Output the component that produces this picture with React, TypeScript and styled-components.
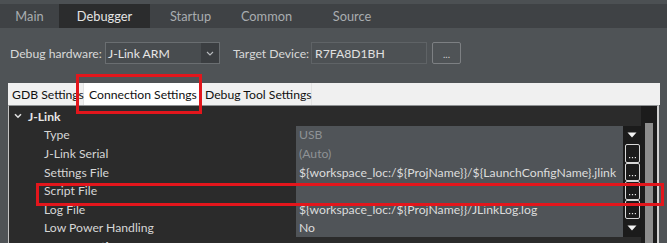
import React from 'react';
import styled, { createGlobalStyle } from 'styled-components';

const Global = createGlobalStyle`
  html, body { margin: 0; padding: 0; background: #4f5356; }
  #root { width: 667px; height: 243px; }
`;

const FONT = `Lato, "Noto Sans", sans-serif`;

const Root = styled.div`
  position: relative;
  width: 667px;
  height: 243px;
  overflow: hidden;
  background: #4f5356;
  font-family: ${FONT};
  font-size: 12px;
  border-top: 4px solid #4c5053;
  box-sizing: border-box;
`;

const TabBar = styled.div`
  display: flex;
  height: 24px;
  background: #3f4245;
`;

const Tab = styled.div<{ $w: number; $active?: boolean }>`
  width: ${p => p.$w}px;
  display: flex;
  align-items: center;
  justify-content: center;
  color: ${p => (p.$active ? '#e4e4e4' : '#a9adb0')};
  background: ${p => (p.$active ? '#2b2c2d' : 'transparent')};
  font-size: 12.8px;
  padding-bottom: 1px;
  box-sizing: border-box;
`;

const FormRow = styled.div`
  display: flex;
  align-items: center;
  height: 22px;
  margin-top: 14px;
  padding-left: 10px;
  color: #d9d9d9;
  font-size: 12.2px;
`;

const FieldLabel = styled.span<{ $w: number; $pl?: number }>`
  width: ${p => p.$w}px;
  padding-left: ${p => p.$pl ?? 0}px;
  box-sizing: border-box;
  flex: none;
  white-space: nowrap;
`;

const Combo = styled.div`
  display: flex;
  width: 115px;
  height: 22px;
  box-sizing: border-box;
  border: 1px solid #6a6e71;
  background: #484c4f;
  color: #e6e6e6;
`;

const ComboText = styled.span`
  flex: 1;
  display: flex;
  align-items: center;
  padding-left: 2px;
`;

const ComboArrow = styled.span`
  width: 18px;
  display: flex;
  align-items: center;
  justify-content: center;
  background: #3b3e41;
`;

const TextField = styled.div`
  width: 116px;
  height: 22px;
  box-sizing: border-box;
  border: 1px solid #5f6366;
  background: #4d5154;
  color: #e0e0e0;
  display: flex;
  align-items: center;
  padding-left: 3px;
`;

const DotsButton = styled.div`
  width: 29px;
  height: 22px;
  box-sizing: border-box;
  margin-left: 5px;
  border: 1px solid #7d8083;
  border-radius: 2px;
  display: flex;
  align-items: flex-end;
  justify-content: center;
  color: #d0d0d0;
  font-size: 10px;
  line-height: 14px;
  padding-bottom: 2px;
`;

const SubTabs = styled.div`
  display: flex;
  margin: 19px 7px 0 8px;
  height: 22px;
  background: #f0f0f0;
`;

const SubTab = styled.div<{ $w: number; $active?: boolean }>`
  width: ${p => p.$w}px;
  box-sizing: border-box;
  display: flex;
  align-items: center;
  padding-left: ${p => (p.$active ? 5 : 4)}px;
  color: #111;
  font-size: 12.2px;
  background: ${p => (p.$active ? '#ffffff' : 'transparent')};
  border-right: 1px solid #e3e3e3;
  white-space: nowrap;
`;

const Tree = styled.div`
  display: flex;
  margin-left: 8px;
  width: 651px;
  height: 140px;
  box-sizing: border-box;
  border-top: 1px solid #8f9294;
  border-left: 1px solid #c4c4c4;
  border-right: 2px solid #d2d2d2;
  background: #2b2b2b;
`;

const TreeBody = styled.div`
  width: 632px;
  padding-top: 1px;
  display: flex;
  flex-direction: column;
`;

const Category = styled.div`
  height: 18.6px;
  display: flex;
  align-items: center;
  padding-left: 5px;
  gap: 6px;
  color: #e6e6e6;
  font-weight: 700;
  font-size: 12.2px;
  flex: none;
`;

const Row = styled.div`
  height: 18.6px;
  display: grid;
  grid-template-columns: 287px 327px 18px;
  flex: none;
`;

const Label = styled.div`
  display: flex;
  align-items: center;
  padding-left: 35px;
  color: #d6d6d6;
  font-size: 12.2px;
  white-space: nowrap;
`;

const Value = styled.div<{ $muted?: boolean }>`
  display: flex;
  align-items: center;
  padding-left: 3px;
  background: #505458;
  color: ${p => (p.$muted ? '#8e9295' : '#dcdcdc')};
  font-size: 12.2px;
  white-space: nowrap;
  overflow: hidden;
`;

const Action = styled.div`
  background: #1b1b1b;
  display: flex;
  align-items: center;
  justify-content: center;
`;

const CellButton = styled.div`
  width: 15px;
  height: 100%;
  box-sizing: border-box;
  border: 1px solid #d8d8d8;
  border-radius: 2px;
  display: flex;
  align-items: flex-end;
  justify-content: center;
  padding-bottom: 3px;
`;

const Scrollbar = styled.div`
  width: 16px;
  background: #1c1c1c;
  display: flex;
  justify-content: center;
  padding-top: 17px;
  box-sizing: border-box;
`;

const Thumb = styled.div`
  width: 8px;
  height: 200px;
  background: #8d8d8d;
`;

const Highlight = styled.div<{ $x: number; $y: number; $w: number; $h: number }>`
  position: absolute;
  left: ${p => p.$x}px;
  top: ${p => p.$y}px;
  width: ${p => p.$w}px;
  height: ${p => p.$h}px;
  box-sizing: border-box;
  border: 3px solid #e3161c;
  pointer-events: none;
`;

const Chevron = () => (
  <svg width="8" height="6" viewBox="0 0 8 6">
    <path d="M1 1.2 L4 4.2 L7 1.2" fill="none" stroke="#e0e0e0" strokeWidth="1.6" />
  </svg>
);

const DownTri = () => (
  <svg width="10" height="6" viewBox="0 0 10 6">
    <path d="M0.5 0.5 L9.5 0.5 L5 5.5 Z" fill="#f2f2f2" />
  </svg>
);

const ComboChevron = () => (
  <svg width="8" height="5" viewBox="0 0 8 5">
    <path d="M1 1 L4 4 L7 1" fill="none" stroke="#b8bbbe" strokeWidth="1.1" />
  </svg>
);

const Dots = () => (
  <svg width="7" height="2" viewBox="0 0 7 2">
    <rect x="0" y="0" width="1.2" height="1.2" fill="#e8e8e8" />
    <rect x="2.9" y="0" width="1.2" height="1.2" fill="#e8e8e8" />
    <rect x="5.8" y="0" width="1.2" height="1.2" fill="#e8e8e8" />
  </svg>
);

type Prop = { label: string; value: string; muted?: boolean; action: 'drop' | 'dots' };

const props: Prop[] = [
  { label: 'Type', value: 'USB', muted: true, action: 'drop' },
  { label: 'J-Link Serial', value: '(Auto)', muted: true, action: 'dots' },
  { label: 'Settings File', value: '${workspace_loc:/${ProjName}}/${LaunchConfigName}.jlink', action: 'dots' },
  { label: 'Script File', value: '', action: 'dots' },
  { label: 'Log File', value: '${workspace_loc:/${ProjName}}/JLinkLog.log', action: 'dots' },
  { label: 'Low Power Handling', value: 'No', action: 'drop' },
];

export default function App() {
  return (
    <Root>
      <Global />
      <TabBar>
        <Tab $w={59}>Main</Tab>
        <Tab $w={91} $active>Debugger</Tab>
        <Tab $w={81}>Startup</Tab>
        <Tab $w={71}>Common</Tab>
        <Tab $w={100}>Source</Tab>
      </TabBar>
      <FormRow>
        <FieldLabel $w={95}>Debug hardware:</FieldLabel>
        <Combo>
          <ComboText>J-Link ARM</ComboText>
          <ComboArrow><ComboChevron /></ComboArrow>
        </Combo>
        <FieldLabel $w={91} $pl={13}>Target Device:</FieldLabel>
        <TextField>R7FA8D1BH</TextField>
        <DotsButton>...</DotsButton>
      </FormRow>
      <SubTabs>
        <SubTab $w={76}>GDB Settings</SubTab>
        <SubTab $w={117} $active>Connection Settings</SubTab>
        <SubTab $w={111}>Debug Tool Settings</SubTab>
      </SubTabs>
      <Tree>
        <TreeBody>
          <Category><Chevron />J-Link</Category>
          {props.map(p => (
            <Row key={p.label}>
              <Label>{p.label}</Label>
              <Value $muted={p.muted}>{p.value}</Value>
              <Action>
                {p.action === 'drop' ? <DownTri /> : <CellButton><Dots /></CellButton>}
              </Action>
            </Row>
          ))}
          <Category><Chevron />JTAG Connection</Category>
        </TreeBody>
        <Scrollbar><Thumb /></Scrollbar>
      </Tree>
      <Highlight $x={76} $y={70} $w={126} $h={40} />
      <Highlight $x={36} $y={179} $w={628} $h={23} />
    </Root>
  );
}
